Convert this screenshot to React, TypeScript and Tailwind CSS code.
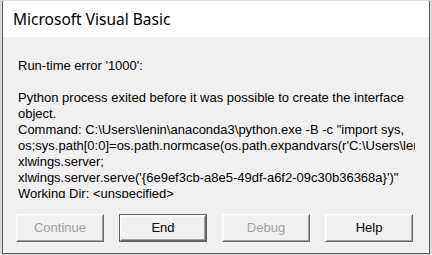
import type { ReactNode } from "react";

const bodyFont = { fontFamily: '"Liberation Sans", Arial, sans-serif' };

function Btn({ children, disabled, primary }: { children: ReactNode; disabled?: boolean; primary?: boolean }) {
  const face = (
    <span className="flex flex-1 border border-t-white border-l-white border-r-[#696969] border-b-[#696969]">
      <span
        className={`flex flex-1 items-center justify-center border border-t-[#f8f8f8] border-l-[#f8f8f8] border-r-[#a0a0a0] border-b-[#a0a0a0] bg-[#f0f0f0] text-[13px] ${
          disabled ? "text-[#a0a0a0]" : "text-black"
        }`}
      >
        {children}
      </span>
    </span>
  );
  return (
    <div className={`flex h-[28px] w-[88px] ${primary ? "border border-[#5f5f5f]" : ""}`}>{face}</div>
  );
}

export default function App() {
  return (
    <div className="flex h-[255px] w-[432px] bg-[#d9d9d9] pl-[2px] pt-[1px]" style={bodyFont}>
      <div className="flex h-[253px] w-[428px] flex-col border-x border-b border-[#5c5c5c] bg-[#f0f0f0]">
        <div className="flex h-[36px] items-center bg-white pl-[10px] pt-[2px]">
          <span className="text-[15.5px] text-black" style={{ fontFamily: '"Noto Sans", sans-serif' }}>
            Microsoft Visual Basic
          </span>
        </div>
        <div className="ml-[15px] mt-[21px] h-[140px] w-[397px] overflow-hidden whitespace-nowrap text-[13px] leading-[16px] text-black">
          <div>Run-time error '1000':</div>
          <div>&nbsp;</div>
          <div>Python process exited before it was possible to create the interface</div>
          <div>object.</div>
          <div>Command: C:\Users\lenin\anaconda3\python.exe -B -c "import sys,</div>
          <div>os;sys.path[0:0]=os.path.normcase(os.path.expandvars(r'C:\Users\lenin</div>
          <div>xlwings.server;</div>
          <div>xlwings.server.serve('{"{"}6e9ef3cb-a8e5-49df-a6f2-09c30b36368a{"}"}')"</div>
          <div>Working Dir: &lt;unspecified&gt;</div>
        </div>
        <div className="ml-[13px] mt-[16px] flex gap-[15px]">
          <Btn disabled>Continue</Btn>
          <Btn primary>End</Btn>
          <Btn disabled>Debug</Btn>
          <Btn>Help</Btn>
        </div>
      </div>
    </div>
  );
}
